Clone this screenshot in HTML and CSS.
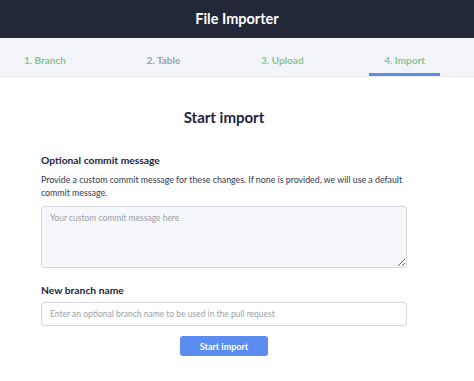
FILE: index.html
```html
<!DOCTYPE html>
<html>
<head>
<meta charset="utf-8">
<link rel="stylesheet" href="styles.css">
</head>
<body>
<header class="topbar">File Importer</header>
<nav class="tabs">
  <span class="tab done">1. Branch</span>
  <span class="tab">2. Table</span>
  <span class="tab done">3. Upload</span>
  <span class="tab done active">4. Import</span>
</nav>
<main class="content">
  <h1 class="title">Start import</h1>
  <section class="field">
    <h2 class="label">Optional commit message</h2>
    <p class="help">Provide a custom commit message for these changes. If none is provided, we will use a default commit message.</p>
    <textarea class="textarea" placeholder="Your custom commit message here"></textarea>
  </section>
  <section class="field">
    <h2 class="label">New branch name</h2>
    <input class="input" type="text" placeholder="Enter an optional branch name to be used in the pull request">
  </section>
  <div class="actions">
    <button class="button">Start import</button>
  </div>
</main>
</body>
</html>
```
FILE: styles.css
```css
* { box-sizing: border-box; }
html, body { margin: 0; padding: 0; background: #ffffff; }
body { font-family: Lato, "Noto Sans", sans-serif; color: #1d2340; width: 474px; height: 381px; overflow: hidden; }

.topbar {
  height: 38px;
  background: #232838;
  color: #ffffff;
  font-size: 14.5px;
  font-weight: 700;
  display: flex;
  align-items: center;
  justify-content: center;
  padding-bottom: 2px;
}

.tabs {
  height: 39px;
  background: #f3f4f8;
  border-bottom: 1px solid #e6e8ee;
  display: flex;
  justify-content: space-between;
  align-items: stretch;
  padding: 0 34px 0 9px;
}
.tab {
  font-size: 10px;
  font-weight: 700;
  color: #9a9fa8;
  padding: 0 15px;
  display: flex;
  align-items: center;
  padding-top: 8px;
  border-bottom: 3px solid transparent;
}
.tab.done { color: #86c495; }
.tab.active { border-bottom-color: #5b8fe6; }

.content { padding: 0 67px 0 41px; }
.title {
  margin: 29px 0 0;
  text-align: center;
  font-size: 15px;
  font-weight: 700;
  line-height: 22px;
}
.field { margin-top: 25px; }
.field + .field { margin-top: 15px; }
.label { margin: 0; font-size: 10.3px; font-weight: 700; line-height: 14px; }
.help { margin: 6px 0 0; font-size: 8.8px; line-height: 13px; color: #33384a; }
.textarea {
  display: block;
  margin-top: 7px;
  width: 366px;
  height: 62px;
  background: #f5f7fa;
  border: 1px solid #d5d8de;
  border-radius: 3px;
  padding: 6px 8px;
  font-family: inherit;
  font-size: 8.5px;
  resize: vertical;
}
.input {
  display: block;
  margin-top: 5px;
  width: 366px;
  height: 24px;
  background: #ffffff;
  border: 1px solid #d5d8de;
  border-radius: 3px;
  padding: 0 8px;
  font-family: inherit;
  font-size: 8.5px;
}
.textarea::placeholder, .input::placeholder { color: #9aa0a8; }

.actions { display: flex; justify-content: center; margin-top: 10px; }
.button {
  width: 88px;
  height: 20px;
  background: #5b8def;
  color: #ffffff;
  border: none;
  border-radius: 3px;
  font-family: inherit;
  font-size: 9px;
  font-weight: 700;
}
```
